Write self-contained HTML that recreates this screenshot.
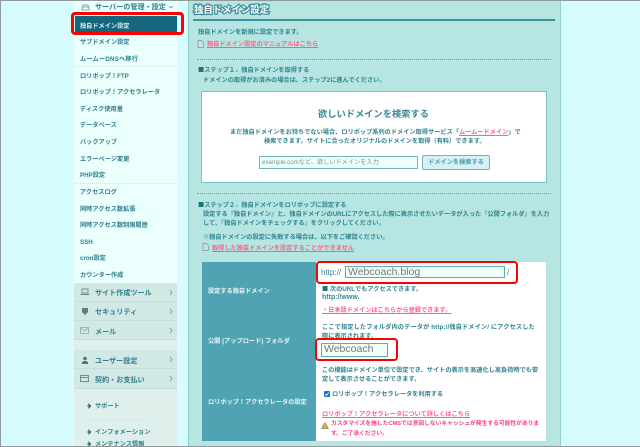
<!DOCTYPE html>
<html lang="ja"><head><meta charset="utf-8"><style>
html,body{margin:0;padding:0}
body{width:640px;height:447px;overflow:hidden;position:relative;background:#d7fcff;font-family:"Liberation Sans","Noto Sans CJK JP",sans-serif;font-weight:700;font-size:6.2px;color:#2f8390}
#w{position:absolute;left:0;top:0;width:640px;height:447px;overflow:hidden;filter:blur(.3px)}
#w div{position:absolute;white-space:nowrap}
#w svg{position:absolute}
.s{left:80px;font-size:6.2px;line-height:8px;color:#2f7f8e}
.h{left:74px;width:103px;background:#d2e8e5;border-bottom:1px solid #c4dedb;box-sizing:border-box}
.t{left:95px;font-size:7.1px;line-height:9px;color:#2f7f8e}
.m{line-height:8px}
.p{color:#ff5f86;text-decoration:underline}
.d{height:0;border-top:1px dotted #5aa9ad}
.r{border:2.5px solid #f00;border-radius:4px;box-sizing:border-box}
.i{background:#effffe;border:1px solid #67a9b1;box-sizing:border-box;font-weight:400;color:#777;font-size:10.5px;line-height:11px;padding-left:2px}
.l{color:#e8f6f6;font-size:6.2px;line-height:8px;left:208px}
.q{font-family:"Noto Sans CJK JP",sans-serif;color:#1d7383}
</style></head><body><div id="w">
<div style="left:74px;top:0;width:103px;height:447px;background:#ebfffd"></div>
<div style="left:188px;top:0;width:373px;height:447px;background:#b7e6e2;border-left:1.5px solid #8ccac8;border-right:1.5px solid #95d0ce;box-sizing:border-box"></div>

<svg style="left:81px;top:4px" width="9" height="7"><path d="M2 1h5v2H2zM1 3h7v3H1z" fill="none" stroke="#6d8d92" stroke-width=".8"/></svg>
<div class="t" style="top:3px">サーバーの管理・設定</div>
<svg style="left:168px;top:5px" width="6" height="5"><path d="M1 1l2 2 2-2" fill="none" stroke="#6d8d92" stroke-width=".8"/></svg>
<div style="left:75px;top:16px;width:102px;height:18px;background:#15657c"></div>
<div class="s" style="top:23px;color:#d9f3f3">独自ドメイン設定</div>
<div class="r" style="left:71px;top:12px;width:113px;height:23px;border-width:3px;border-radius:4px"></div>
<div class="s" style="top:39px">サブドメイン設定</div>
<div class="s" style="top:56px;letter-spacing:.2px">ムームーDNSへ移行</div>
<div class="d" style="left:75px;top:66px;width:102px;border-color:#cfe6e4"></div>
<div class="s" style="top:73px">ロリポップ！FTP</div>
<div class="s" style="top:89px">ロリポップ！アクセラレータ</div>
<div class="s" style="top:106px">ディスク使用量</div>
<div class="s" style="top:122px">データベース</div>
<div class="s" style="top:139px">バックアップ</div>
<div class="s" style="top:156px">エラーページ変更</div>
<div class="s" style="top:172px">PHP設定</div>
<div class="d" style="left:75px;top:183px;width:102px;border-color:#cfe6e4"></div>
<div class="s" style="top:189px">アクセスログ</div>
<div class="s" style="top:206px">同時アクセス数拡張</div>
<div class="s" style="top:222px">同時アクセス数制限履歴</div>
<div class="s" style="top:239px">SSH</div>
<div class="s" style="top:255px">cron設定</div>
<div class="s" style="top:272px">カウンター作成</div>

<div style="left:74px;top:340px;width:103px;height:107px;background:#dfefeb"></div>
<div class="h" style="top:283px;height:19px"></div><div class="h" style="top:302px;height:19px"></div><div class="h" style="top:321px;height:19px"></div>
<div class="h" style="top:350px;height:19px"></div><div class="h" style="top:369px;height:20px"></div>
<svg style="left:80px;top:287px" width="10" height="10"><path d="M2 2h6v4H2zM.5 7.5h9" fill="none" stroke="#668a90" stroke-width=".9"/></svg>
<svg style="left:80px;top:307px" width="10" height="10"><path d="M2 1h6v4l-3 3-3-3z" fill="#5a7f86"/></svg>
<svg style="left:80px;top:327px" width="10" height="8"><path d="M.5.5h8v6h-8zM.5.5l4 3.5 4-3.5" fill="none" stroke="#8aa8ad" stroke-width=".8"/></svg>
<svg style="left:81px;top:356px" width="8" height="9"><circle cx="4" cy="2.5" r="1.8" fill="#4f767e"/><path d="M1 8V6l2-1h2l2 1v2z" fill="#4f767e"/></svg>
<svg style="left:80px;top:375px" width="10" height="8"><path d="M.5.5h8v6h-8z" fill="none" stroke="#6d8d92"/><path d="M1 2h7v1H1z" fill="#6d8d92"/></svg>
<div class="t" style="top:289px">サイト作成ツール</div>
<div class="t" style="top:308px">セキュリティ</div>
<div class="t" style="top:328px">メール</div>
<div class="t" style="top:357px">ユーザー設定</div>
<div class="t" style="top:376px">契約・お支払い</div>
<svg style="left:169px;top:289px" width="5" height="7"><path d="M1 1l2 2.5L1 6" fill="none" stroke="#7c9a9e" stroke-width=".9"/></svg>
<svg style="left:169px;top:308px" width="5" height="7"><path d="M1 1l2 2.5L1 6" fill="none" stroke="#7c9a9e" stroke-width=".9"/></svg>
<svg style="left:169px;top:327px" width="5" height="7"><path d="M1 1l2 2.5L1 6" fill="none" stroke="#7c9a9e" stroke-width=".9"/></svg>
<svg style="left:169px;top:356px" width="5" height="7"><path d="M1 1l2 2.5L1 6" fill="none" stroke="#7c9a9e" stroke-width=".9"/></svg>
<svg style="left:169px;top:375px" width="5" height="7"><path d="M1 1l2 2.5L1 6" fill="none" stroke="#7c9a9e" stroke-width=".9"/></svg>
<svg style="left:86px;top:403px" width="6" height="6"><path d="M1 3h3M2.8 1l2 2-2 2z" fill="#1d6a78" stroke="#1d6a78" stroke-width=".8"/></svg>
<div class="s" style="left:95px;top:403px">サポート</div>
<div class="d" style="left:86px;top:419px;width:64px;border-color:#cde5e0"></div>
<svg style="left:86px;top:429px" width="6" height="6"><path d="M1 3h3M2.8 1l2 2-2 2z" fill="#1d6a78" stroke="#1d6a78" stroke-width=".8"/></svg>
<div class="s" style="left:95px;top:429px">インフォメーション</div>
<svg style="left:86px;top:441px" width="6" height="6"><path d="M1 3h3M2.8 1l2 2-2 2z" fill="#1d6a78" stroke="#1d6a78" stroke-width=".8"/></svg>
<div class="s" style="left:95px;top:441px">メンテナンス情報</div>

<div style="left:194px;top:4px;line-height:11px;font-size:9.4px;color:#fff;-webkit-text-stroke:2.4px #3d8e9c;paint-order:stroke fill">独自ドメイン設定</div>
<div style="left:193px;top:19px;width:362px;height:1.5px;background:#3a929c"></div>
<div class="m" style="left:198px;top:29px">独自ドメインを新規に設定できます。</div>
<svg style="left:197px;top:40px" width="7" height="8"><path d="M1 .5h3.5l2 2v5H1z" fill="#cde" stroke="#6d9ca3" stroke-width=".7"/></svg>
<div class="m p" style="left:207px;top:41px">独自ドメイン設定のマニュアルはこちら</div>
<div class="d" style="left:197px;top:59px;width:354px"></div>
<div class="m" style="left:198px;top:66px"><span class="q">■</span>ステップ１．独自ドメインを取得する</div>
<div class="m" style="left:203px;top:77px">ドメインの取得がお済みの場合は、ステップ2に進んでください。</div>

<div style="left:201px;top:91px;width:346px;height:92px;background:#fff;border:1.2px solid #7fc0c4;box-sizing:border-box"></div>
<div style="left:318px;top:108px;font-size:9.25px;line-height:12px;color:#3a8997">欲しいドメインを検索する</div>
<div class="m" style="left:230px;top:129px">まだ独自ドメインをお持ちでない場合、ロリポップ系列のドメイン取得サービス「<span class="p">ムームードメイン</span>」で</div>
<div class="m" style="left:264px;top:138px">検索できます。サイトに合ったオリジナルのドメインを取得（有料）できます。</div>
<div style="left:259px;top:156px;width:159px;height:13px;background:#effffe;border:1px solid #74b8bd;box-sizing:border-box;font-weight:400;color:#7a9094;line-height:11px;padding-left:2px">example.comなど、欲しいドメインを入力</div>
<div style="left:422px;top:155px;width:68px;height:15px;background:#d6f1f5;border:1px solid #74b5bd;border-radius:2px;box-sizing:border-box;color:#4d9aa8;line-height:13px;text-align:center">ドメインを検索する</div>

<div class="d" style="left:197px;top:193px;width:354px"></div>
<div class="m" style="left:198px;top:201px"><span class="q">■</span>ステップ２．独自ドメインをロリポップに設定する</div>
<div class="m" style="left:203px;top:211px">設定する『独自ドメイン』と、独自ドメインのURLにアクセスした際に表示させたいデータが入った『公開フォルダ』を入力</div>
<div class="m" style="left:203px;top:220px">して、『独自ドメインをチェックする』をクリックしてください。</div>
<div class="m" style="left:203px;top:234px">※独自ドメインの設定に失敗する場合は、以下をご確認ください。</div>
<svg style="left:202px;top:243px" width="7" height="8"><path d="M1 .5h3.5l2 2v5H1z" fill="#cde" stroke="#6d9ca3" stroke-width=".7"/></svg>
<div class="m p" style="left:212px;top:245px">取得した独自ドメインを設定することができません</div>

<div style="left:202px;top:262px;width:344px;height:179px;background:#fff"></div>
<div style="left:202px;top:262px;width:114px;height:179px;background:#50a3b3"></div>
<div class="l" style="top:288px">設定する独自ドメイン</div>
<div class="l" style="top:338px">公開 (アップロード) フォルダ</div>
<div class="l" style="top:399px">ロリポップ！アクセラレータの設定</div>

<div style="left:321px;top:268px;font-size:8px;line-height:9px;font-weight:400;color:#3a7f8d">http://</div>
<div class="i" style="left:345px;top:266px;width:160px;height:12px">Webcoach.blog</div>
<div style="left:507px;top:268px;font-size:8px;line-height:9px;font-weight:400;color:#3a7f8d">/</div>
<div class="r" style="left:316px;top:261px;width:202px;height:23px"></div>
<div class="m" style="left:322px;top:285px"><span class="q">■</span> 次のURLでもアクセスできます。</div>
<div style="left:322px;top:293px;font-size:7px;line-height:9px;color:#3a8795">http://www.</div>
<div class="m p" style="left:322px;top:307px">・日本語ドメインはこちらから登録できます。</div>
<div class="m" style="left:322px;top:324px;letter-spacing:.13px">ここで指定したフォルダ内のデータが http://独自ドメイン/ にアクセスした</div>
<div class="m" style="left:322px;top:333px">際に表示されます。</div>
<div class="i" style="left:321px;top:343px;width:67px;height:14px">Webcoach</div>
<div class="r" style="left:315px;top:338px;width:83px;height:23px"></div>
<div class="m" style="left:322px;top:367px">この機能はドメイン単位で設定でき、サイトの表示を高速化し高負荷時でも安</div>
<div class="m" style="left:322px;top:376px">定して表示させることができます。</div>
<svg style="left:324px;top:391px" width="6" height="6"><rect width="6" height="6" rx="1" fill="#1f6fd0"/><path d="M1.2 3l1.3 1.4 2.2-2.8" fill="none" stroke="#fff" stroke-width=".9"/></svg>
<div class="m" style="left:332px;top:391px">ロリポップ！アクセラレータを利用する</div>
<div class="m p" style="left:322px;top:411px">ロリポップ！アクセラレータについて詳しくはこちら</div>
<svg style="left:321px;top:422px" width="8" height="7"><path d="M4 .5L7.5 6.5H.5z" fill="#d9b23a" stroke="#555" stroke-width=".5"/></svg>
<div class="m" style="left:331px;top:420px;color:#ff3f7a;font-size:5.75px">カスタマイズを施したCMSでは意図しないキャッシュが発生する可能性がありま</div>
<div class="m" style="left:331px;top:430px;color:#ff3f7a;font-size:5.75px">す。ご了承ください。</div>

<div style="left:0;top:0;width:640px;height:1px;background:#8f9a9a"></div>
<div style="left:0;top:446px;width:640px;height:1px;background:#8f9a9a"></div>
<div style="left:0;top:0;width:1px;height:447px;background:#8f9a9a"></div>
</div></body></html>
